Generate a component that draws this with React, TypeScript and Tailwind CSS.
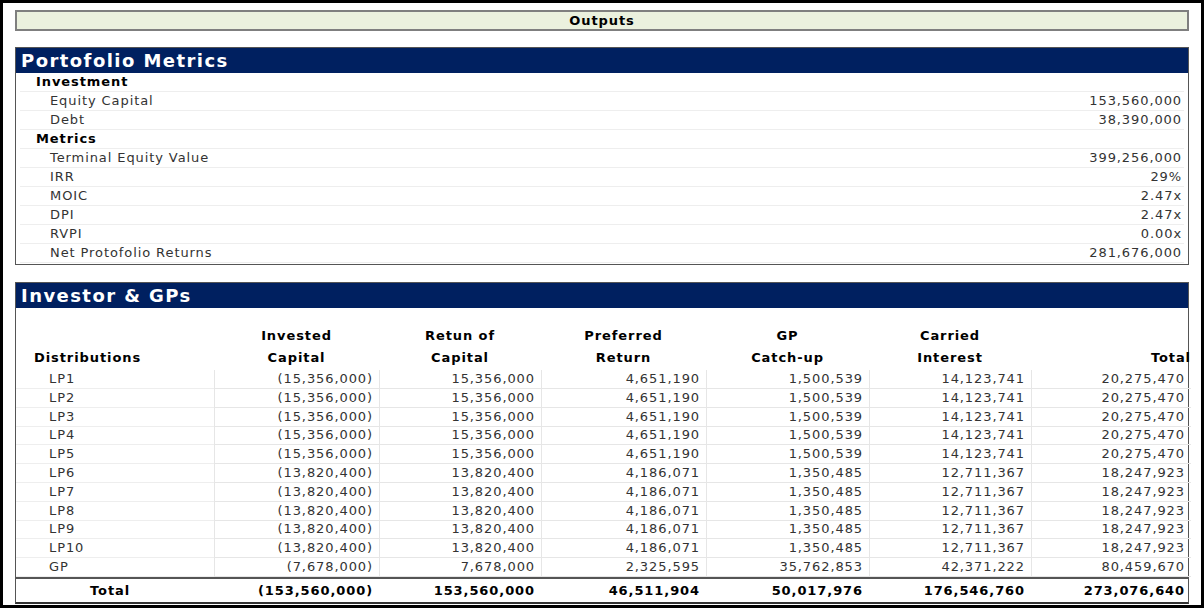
const F = { fontFamily: '"DejaVu Sans", Verdana, sans-serif' };

const metrics: [string, string, boolean][] = [
  ["Investment", "", true],
  ["Equity Capital", "153,560,000", false],
  ["Debt", "38,390,000", false],
  ["Metrics", "", true],
  ["Terminal Equity Value", "399,256,000", false],
  ["IRR", "29%", false],
  ["MOIC", "2.47x", false],
  ["DPI", "2.47x", false],
  ["RVPI", "0.00x", false],
  ["Net Protofolio Returns", "281,676,000", false],
];

const A = ["(15,356,000)", "15,356,000", "4,651,190", "1,500,539", "14,123,741", "20,275,470"];
const B = ["(13,820,400)", "13,820,400", "4,186,071", "1,350,485", "12,711,367", "18,247,923"];
const rows: [string, string[]][] = [
  ["LP1", A], ["LP2", A], ["LP3", A], ["LP4", A], ["LP5", A],
  ["LP6", B], ["LP7", B], ["LP8", B], ["LP9", B], ["LP10", B],
  ["GP", ["(7,678,000)", "7,678,000", "2,325,595", "35,762,853", "42,371,222", "80,459,670"]],
];
const totals = ["(153,560,000)", "153,560,000", "46,511,904", "50,017,976", "176,546,760", "273,076,640"];
const cols = "grid grid-cols-[198px_165px_162px_165px_163px_162px_160px]";

export default function App() {
  return (
    <div style={F} className="w-[1204px] h-[608px] bg-white border-[3px] border-black text-[13px] tracking-[0.07em] text-[#333] overflow-hidden">
      <div className="px-[12px] pt-[7px]">
        <div className="h-[21px] bg-[#ebf1de] border-2 border-[#7f7f7f] flex items-center justify-center font-bold text-[13px] text-black">Outputs</div>

        <div className="mt-[16px] border border-[#555]">
          <div className="h-[25px] bg-[#002060] text-white text-[18px] font-bold tracking-[0.08em] px-[5px] flex items-center">Portofolio Metrics</div>
          <div className="px-[4px] pb-[1px]">
            {metrics.map(([l, v, b], i) => (
              <div key={i} className={`h-[19px] flex items-center justify-between border-b border-[#eee] ${b ? "font-bold text-black pl-[16px]" : "pl-[30px]"} pr-[2px]`}>
                <span>{l}</span><span>{v}</span>
              </div>
            ))}
          </div>
        </div>

        <div className="mt-[17px] border border-[#555] border-b-2 border-b-[#333]">
          <div className="h-[25px] bg-[#002060] text-white text-[18px] font-bold tracking-[0.08em] px-[5px] flex items-center">Investor &amp; GPs</div>
          <div className={`${cols} font-bold text-black pt-[17px] pb-[1px]`}>
            <div className="flex items-end pl-[18px]"><span className="leading-[22px]">Distributions</span></div>
            {[["Invested", "Capital"], ["Retun of", "Capital"], ["Preferred", "Return"], ["GP", "Catch-up"], ["Carried", "Interest"], ["", "Total"]].map(([a, b], i) => (
              <div key={i} className={`flex flex-col leading-[22px] ${i === 5 ? "items-end pr-[0px]" : "items-center"}`}>
                <span className={i === 5 ? "h-[22px]" : ""}>{a}</span><span>{b}</span>
              </div>
            ))}
          </div>
          {rows.map(([n, v]) => (
            <div key={n} className={`${cols} h-[18.8px] leading-[18px]`}>
              <div className="pl-[33px] border-b border-[#eee]">{n}</div>
              {v.map((x, i) => (
                <div key={i} className="text-right pr-[6px] border-l border-b border-[#e6e6e6]">{x}</div>
              ))}
            </div>
          ))}
          <div className={`${cols} h-[25px] items-center font-bold text-black border-t-2 border-[#555]`}>
            <div className="pl-[74px]">Total</div>
            {totals.map((x, i) => <div key={i} className="text-right pr-[6px] whitespace-nowrap">{x}</div>)}
          </div>
        </div>
      </div>
    </div>
  );
}
